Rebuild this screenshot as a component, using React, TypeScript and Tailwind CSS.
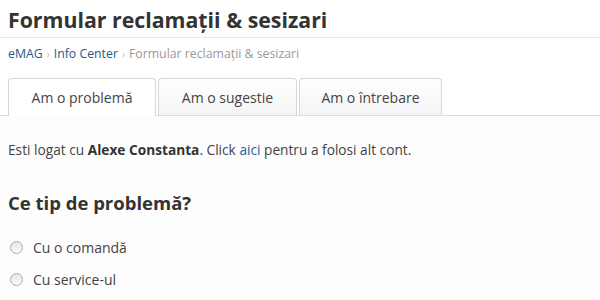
import React from "react";

const tabs = ["Am o problemă", "Am o sugestie", "Am o întrebare"];

export default function App() {
  return (
    <div className="w-[600px] h-[300px] overflow-hidden bg-white text-[#333] font-['Open_Sans',sans-serif]">
      <h1 className="px-2 pt-[6px] h-[38px] text-[21.3px] font-bold leading-[28px] text-[#333] border-b border-[#e8e8e8]">
        Formular reclamații &amp; sesizari
      </h1>
      <div className="px-2 pt-[8px] h-[40px] text-[12.3px] leading-[16px] flex items-start gap-1">
        <a className="text-[#1e5b8a]">eMAG</a>
        <span className="text-[#bbb] text-[10px]">›</span>
        <a className="text-[#1e5b8a]">Info Center</a>
        <span className="text-[#bbb] text-[10px]">›</span>
        <span className="text-[#999]">Formular reclamații &amp; sesizari</span>
      </div>
      <div className="flex gap-[2px] px-2 border-b border-[#ddd] h-[38px]">
        {tabs.map((t, i) => (
          <div
            key={t}
            className={
              i === 0
                ? "w-[148px] h-[38px] -mb-px rounded-t-[4px] border border-b-0 border-[#d6d6d6] bg-white flex items-center justify-center text-[14px] text-[#444]"
                : i === 1
                ? "w-[139px] h-[37px] rounded-t-[4px] border border-b-0 border-[#d6d6d6] bg-gradient-to-b from-white to-[#f4f4f4] flex items-center justify-center text-[14px] text-[#444]"
                : "w-[143px] h-[37px] rounded-t-[4px] border border-b-0 border-[#d6d6d6] bg-gradient-to-b from-white to-[#f4f4f4] flex items-center justify-center text-[14px] text-[#444]"
            }
          >
            {t}
          </div>
        ))}
      </div>
      <div className="bg-[#fdfdfd] px-2 h-[200px]">
        <p className="pt-[25px] text-[13.7px] leading-[18px] text-[#444]">
          Esti logat cu <b className="text-[#333]">Alexe Constanta</b>. Click{" "}
          <a className="text-[#1f5f9a]">aici</a> pentru a folosi alt cont.
        </p>
        <h2 className="mt-[32px] text-[18.5px] font-bold leading-[24px] text-[#333]">
          Ce tip de problemă?
        </h2>
        <div className="mt-[23px] flex flex-col gap-[13px]">
          {["Cu o comandă", "Cu service-ul"].map((l) => (
            <label key={l} className="flex items-center gap-[10px] text-[14px] leading-[19px] text-[#444]">
              <span className="ml-[2px] w-[13px] h-[13px] rounded-full border border-[#aaa] bg-gradient-to-b from-[#e6e6e6] to-[#fafafa]" />
              {l}
            </label>
          ))}
        </div>
      </div>
    </div>
  );
}
